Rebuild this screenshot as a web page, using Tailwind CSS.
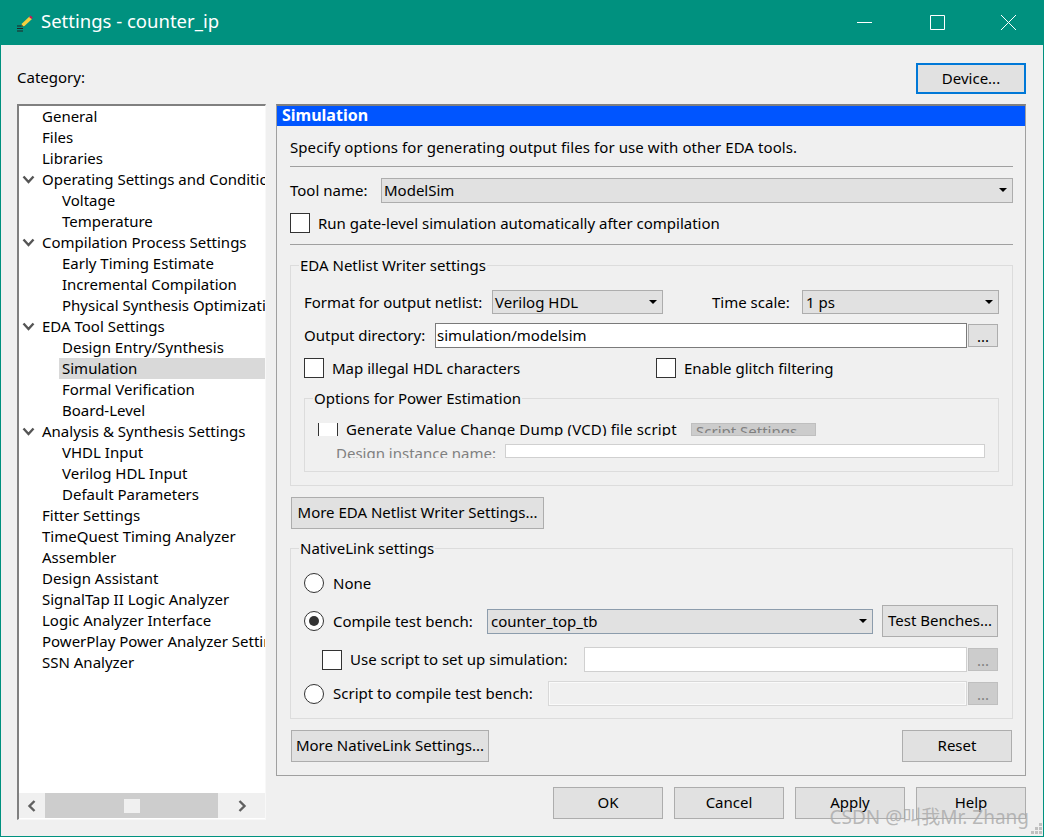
<!DOCTYPE html>
<html lang="en">
<head>
<meta charset="UTF-8">
<title>Settings - counter_ip</title>
<script src="https://cdn.jsdelivr.net/npm/@tailwindcss/browser@4"></script>
</head>
<body class="w-[1044px] h-[837px] overflow-hidden bg-[#00917f]">
<div class="relative flex flex-col h-[837px] font-['Noto_Sans','Noto_Sans_CJK_SC',sans-serif] text-[15px] leading-[21px] text-black">

  <!-- title bar -->
  <div class="flex items-center h-[45px] shrink-0 text-white">
    <svg class="ml-[16px] w-[18px] h-[18px]" viewBox="0 0 18 18">
      <path d="M6 9.5 13.5 2.5 16 5 8.5 12 5.5 12.5Z" fill="#f4d03f"/>
      <path d="M13 3 14.5 1.6 16.8 3.6 15.5 5Z" fill="#c2185b"/>
      <path d="M1 12h6M1 14.5h6M1 17h6" stroke="#222" stroke-width="1.2"/>
    </svg>
    <span class="ml-[7px] mb-[3px] text-[18.5px] leading-[24px]">Settings - counter_ip</span>
    <svg class="ml-auto mr-[58px] w-[15px] h-[15px]" viewBox="0 0 15 15"><path d="M0 7.5h15" stroke="#fff"/></svg>
    <svg class="mr-[56px] w-[15px] h-[15px]" viewBox="0 0 15 15"><path d="M.5.5h14v14H.5Z" fill="none" stroke="#fff"/></svg>
    <svg class="mr-[28px] w-[15px] h-[15px]" viewBox="0 0 15 15"><path d="M0 0 15 15M15 0 0 15" stroke="#fff"/></svg>
  </div>

  <!-- client area -->
  <div class="flex-1 mx-[1px] mb-[1px] bg-[#f0f0f0] pl-[16px] pr-[17px]">
    <div class="flex items-center justify-between h-[59px] pt-[4px]">
      <span class="mt-[2px]">Category:</span>
      <button class="w-[110px] h-[31px] mt-[4px] bg-[#e1e1e1] border-2 border-[#0078d7]">Device...</button>
    </div>

    <div class="flex gap-[10px]">
      <!-- tree -->
      <div class="flex flex-col w-[249px] h-[716px] bg-white border border-[#f8f8f8] border-t-2 border-l-2 border-t-[#808080] border-l-[#808080]">
        <div class="flex-1 overflow-hidden whitespace-nowrap">
          <div class="h-[21px] pl-[23px]">General</div>
          <div class="h-[21px] pl-[23px]">Files</div>
          <div class="h-[21px] pl-[23px]">Libraries</div>
          <div class="flex items-center h-[21px] pl-[3px]"><svg class="w-[13px] h-[9px] mr-[7px] shrink-0" viewBox="0 0 13 9"><path d="M1.5 1.5 6.500 7 11.500 1.500" fill="none" stroke="#555" stroke-width="2.400"/></svg>Operating Settings and Conditions</div>
          <div class="h-[21px] pl-[43px]">Voltage</div>
          <div class="h-[21px] pl-[43px]">Temperature</div>
          <div class="flex items-center h-[21px] pl-[3px]"><svg class="w-[13px] h-[9px] mr-[7px] shrink-0" viewBox="0 0 13 9"><path d="M1.5 1.5 6.500 7 11.500 1.500" fill="none" stroke="#555" stroke-width="2.400"/></svg>Compilation Process Settings</div>
          <div class="h-[21px] pl-[43px]">Early Timing Estimate</div>
          <div class="h-[21px] pl-[43px]">Incremental Compilation</div>
          <div class="h-[21px] pl-[43px]">Physical Synthesis Optimizations</div>
          <div class="flex items-center h-[21px] pl-[3px]"><svg class="w-[13px] h-[9px] mr-[7px] shrink-0" viewBox="0 0 13 9"><path d="M1.5 1.5 6.500 7 11.500 1.500" fill="none" stroke="#555" stroke-width="2.400"/></svg>EDA Tool Settings</div>
          <div class="h-[21px] pl-[43px]">Design Entry/Synthesis</div>
          <div class="h-[21px] ml-[40px] pl-[3px] bg-[#d9d9d9]">Simulation</div>
          <div class="h-[21px] pl-[43px]">Formal Verification</div>
          <div class="h-[21px] pl-[43px]">Board-Level</div>
          <div class="flex items-center h-[21px] pl-[3px]"><svg class="w-[13px] h-[9px] mr-[7px] shrink-0" viewBox="0 0 13 9"><path d="M1.5 1.5 6.500 7 11.500 1.500" fill="none" stroke="#555" stroke-width="2.400"/></svg>Analysis &amp; Synthesis Settings</div>
          <div class="h-[21px] pl-[43px]">VHDL Input</div>
          <div class="h-[21px] pl-[43px]">Verilog HDL Input</div>
          <div class="h-[21px] pl-[43px]">Default Parameters</div>
          <div class="h-[21px] pl-[23px]">Fitter Settings</div>
          <div class="h-[21px] pl-[23px]">TimeQuest Timing Analyzer</div>
          <div class="h-[21px] pl-[23px]">Assembler</div>
          <div class="h-[21px] pl-[23px]">Design Assistant</div>
          <div class="h-[21px] pl-[23px]">SignalTap II Logic Analyzer</div>
          <div class="h-[21px] pl-[23px]">Logic Analyzer Interface</div>
          <div class="h-[21px] pl-[23px]">PowerPlay Power Analyzer Settings</div>
          <div class="h-[21px] pl-[23px]">SSN Analyzer</div>
        </div>
        <!-- horizontal scrollbar -->
        <div class="flex h-[25px] mb-[1px] bg-[#f0f0f0]">
          <div class="flex items-center justify-center w-[26px]"><svg class="w-[10px] h-[12px]" viewBox="0 0 10 12"><path d="M7.500 1 2.500 6 7.500 11" fill="none" stroke="#606060" stroke-width="2.400"/></svg></div>
          <div class="flex items-center justify-center w-[173px] bg-[#cdcdcd]"><div class="w-[16px] h-[14px] bg-[#f0f0f0]"></div></div>
          <div class="flex items-center justify-center flex-1"><svg class="w-[10px] h-[12px]" viewBox="0 0 10 12"><path d="M2.500 1 7.500 6 2.500 11" fill="none" stroke="#606060" stroke-width="2.400"/></svg></div>
        </div>
      </div>

      <!-- right column -->
      <div class="w-[750px]">
        <div class="h-[672px] border border-[#a0a0a0] border-t-2 border-t-[#808080] whitespace-nowrap">
          <div class="h-[20px] pl-[5px] bg-[#0055ff] text-white text-[16px] font-bold leading-[18px]">Simulation</div>
          <div class="pl-[13px] pr-[12px]">
            <div class="h-[40px] pt-[11px] tracking-[0.08px]">Specify options for generating output files for use with other EDA tools.</div>
            <div class="h-[1px] bg-[#a0a0a0]"></div>

            <div class="flex items-center h-[25px] mt-[11px]">
              <span class="w-[91px]">Tool name:</span>
              <div class="relative flex items-center flex-1 h-[25px] pl-[2px] bg-[#e1e1e1] border border-[#adadad]">ModelSim
                <div class="absolute right-[5px] top-[9px] border-x-[4px] border-x-transparent border-t-[4px] border-t-black"></div></div>
            </div>
            <div class="flex items-center h-[20px] mt-[10px]">
              <div class="w-[20px] h-[20px] bg-white border border-[#333]"></div>
              <span class="ml-[8px]">Run gate-level simulation automatically after compilation</span>
            </div>
            <div class="h-[1px] mt-[11px] bg-[#a0a0a0]"></div>

            <!-- EDA Netlist Writer settings -->
            <div class="h-[221px] mt-[20px] border border-[#dcdcdc] pl-[13px]">
              <div class="w-fit -mt-[11px] -ml-[5px] px-[1px] h-[21px] bg-[#f0f0f0]">EDA Netlist Writer settings</div>
              <div class="flex items-center h-[24px] mt-[14px]">
                <span class="w-[188px]">Format for output netlist:</span>
                <div class="relative flex items-center w-[171px] h-[24px] pl-[2px] bg-[#e1e1e1] border border-[#adadad]">Verilog HDL
                  <div class="absolute right-[5px] top-[9px] border-x-[4px] border-x-transparent border-t-[4px] border-t-black"></div></div>
                <span class="ml-[49px] w-[90px]">Time scale:</span>
                <div class="relative flex items-center w-[197px] h-[24px] pl-[3px] bg-[#e1e1e1] border border-[#adadad]">1 ps
                  <div class="absolute right-[5px] top-[9px] border-x-[4px] border-x-transparent border-t-[4px] border-t-black"></div></div>
              </div>
              <div class="flex items-center h-[25px] mt-[9px]">
                <span class="w-[131px]">Output directory:</span>
                <div class="flex items-center w-[532px] h-[25px] pl-[1px] bg-white border border-[#7a7a7a]">simulation/modelsim</div>
                <div class="w-[30px] h-[23px] ml-[1px] bg-[#e1e1e1] border border-[#adadad] text-center leading-[23px]">...</div>
              </div>
              <div class="flex items-center h-[20px] mt-[10px]">
                <div class="w-[20px] h-[20px] bg-white border border-[#333]"></div>
                <span class="ml-[8px] mt-[1px] w-[324px]">Map illegal HDL characters</span>
                <div class="w-[20px] h-[20px] bg-white border border-[#333]"></div>
                <span class="ml-[8px] mt-[1px]">Enable glitch filtering</span>
              </div>
              <!-- Options for Power Estimation, its rows are clipped as in the dialog -->
              <div class="w-[695px] h-[74px] mt-[20px] border border-[#dcdcdc] pl-[9px]">
                <div class="w-fit h-[21px] -mt-[11px] -ml-[1px] px-[1px] bg-[#f0f0f0]">Options for Power Estimation</div>
                <div class="flex h-[13px] mt-[14px] overflow-hidden">
                  <div class="w-[20px] h-[16px] ml-[4px] bg-white border-x border-[#333]"></div>
                  <span class="ml-[8px] -mt-[4px] w-[345px] tracking-[0.16px]">Generate Value Change Dump (VCD) file script</span>
                  <div class="w-[125px] h-[13px] pl-[4px] bg-[#cccccc] border border-[#bfbfbf] text-[#808080]"><div class="h-[9px] overflow-hidden leading-[14px]">Script Settings</div></div>
                </div>
                <div class="flex mt-[9px]">
                  <div class="h-[14px] ml-[22px] w-[169px] overflow-hidden text-[#808080] -mt-[1px] leading-[18px]">Design instance name:</div>
                  <div class="w-[480px] h-[14px] -mt-[1px] bg-white border border-[#d0d0d0]"></div>
                </div>
              </div>
            </div>

            <button class="block h-[32px] w-[253px] mt-[11px] ml-[1px] pb-[2px] bg-[#e1e1e1] border border-[#adadad]">More EDA Netlist Writer Settings...</button>

            <!-- NativeLink settings -->
            <div class="h-[171px] mt-[19px] border border-[#dcdcdc] pl-[13px]">
              <div class="w-fit -mt-[11px] -ml-[5px] px-[1px] h-[21px] bg-[#f0f0f0]">NativeLink settings</div>
              <div class="flex items-center h-[20px] mt-[14px]">
                <div class="w-[20px] h-[20px] rounded-full bg-white border border-[#333]"></div>
                <span class="ml-[9px]">None</span>
              </div>
              <div class="flex items-center h-[32px] mt-[12px]">
                <div class="flex items-center justify-center w-[20px] h-[20px] rounded-full bg-white border border-[#333]"><div class="w-[10px] h-[10px] rounded-full bg-[#333]"></div></div>
                <span class="ml-[9px] w-[154px]">Compile test bench:</span>
                <div class="relative flex items-center w-[386px] h-[25px] pl-[3px] bg-[#e1e1e1] border border-[#8c9cac]">counter_top_tb
                  <div class="absolute right-[5px] top-[9px] border-x-[4px] border-x-transparent border-t-[4px] border-t-black"></div></div>
                <button class="w-[116px] h-[32px] ml-[9px] pb-[2px] bg-[#e1e1e1] border border-[#adadad]">Test Benches...</button>
              </div>
              <div class="flex items-center h-[25px] mt-[10px]">
                <div class="w-[20px] h-[20px] ml-[18px] bg-white border border-[#333]"></div>
                <span class="ml-[8px] w-[234px]">Use script to set up simulation:</span>
                <div class="w-[383px] h-[25px] bg-white border border-[#d0d0d0]"></div>
                <div class="w-[30px] h-[23px] ml-[1px] bg-[#cccccc] border border-[#bfbfbf] text-center text-[#808080] leading-[23px]">...</div>
              </div>
              <div class="flex items-center h-[25px] mt-[9px]">
                <div class="w-[20px] h-[20px] rounded-full bg-white border border-[#333]"></div>
                <span class="ml-[9px] w-[215px]">Script to compile test bench:</span>
                <div class="w-[419px] h-[25px] bg-[#f0f0f0] border border-[#d8d8d8] shadow-[inset_0_0_0_1px_#fafafa]"></div>
                <div class="w-[30px] h-[23px] ml-[1px] bg-[#cccccc] border border-[#bfbfbf] text-center text-[#808080] leading-[23px]">...</div>
              </div>
            </div>

            <div class="flex justify-between mt-[11px] ml-[1px]">
              <button class="w-[198px] h-[32px] pb-[2px] bg-[#e1e1e1] border border-[#adadad]">More NativeLink Settings...</button>
              <button class="w-[110px] h-[32px] mr-[1px] pb-[2px] bg-[#e1e1e1] border border-[#adadad]">Reset</button>
            </div>
          </div>
        </div>

        <div class="flex justify-end gap-[11px] mt-[11px]">
          <button class="w-[110px] h-[32px] pb-[2px] bg-[#e1e1e1] border border-[#adadad]">OK</button>
          <button class="w-[110px] h-[32px] pb-[2px] bg-[#e1e1e1] border border-[#adadad]">Cancel</button>
          <button class="w-[110px] h-[32px] pb-[2px] bg-[#e1e1e1] border border-[#adadad]">Apply</button>
          <button class="w-[110px] h-[32px] pb-[2px] bg-[#e1e1e1] border border-[#adadad]">Help</button>
        </div>
      </div>
    </div>
  </div>

  <!-- size grip -->
  <svg class="absolute right-[2px] bottom-[3px] w-[11px] h-[11px]" viewBox="0 0 11 11"><path d="M8 0h3v3H8ZM4 4h3v3H4ZM8 4h3v3H8ZM0 8h3v3H0ZM4 8h3v3H4ZM8 8h3v3H8Z" fill="#c0c0c0"/></svg>
  <!-- watermark -->
  <div class="absolute right-[15px] bottom-[7px] text-[19px] leading-[26px] text-[#a8a8a8]/80 whitespace-nowrap">CSDN @叫我Mr. Zhang</div>
</div>
</body>
</html>
